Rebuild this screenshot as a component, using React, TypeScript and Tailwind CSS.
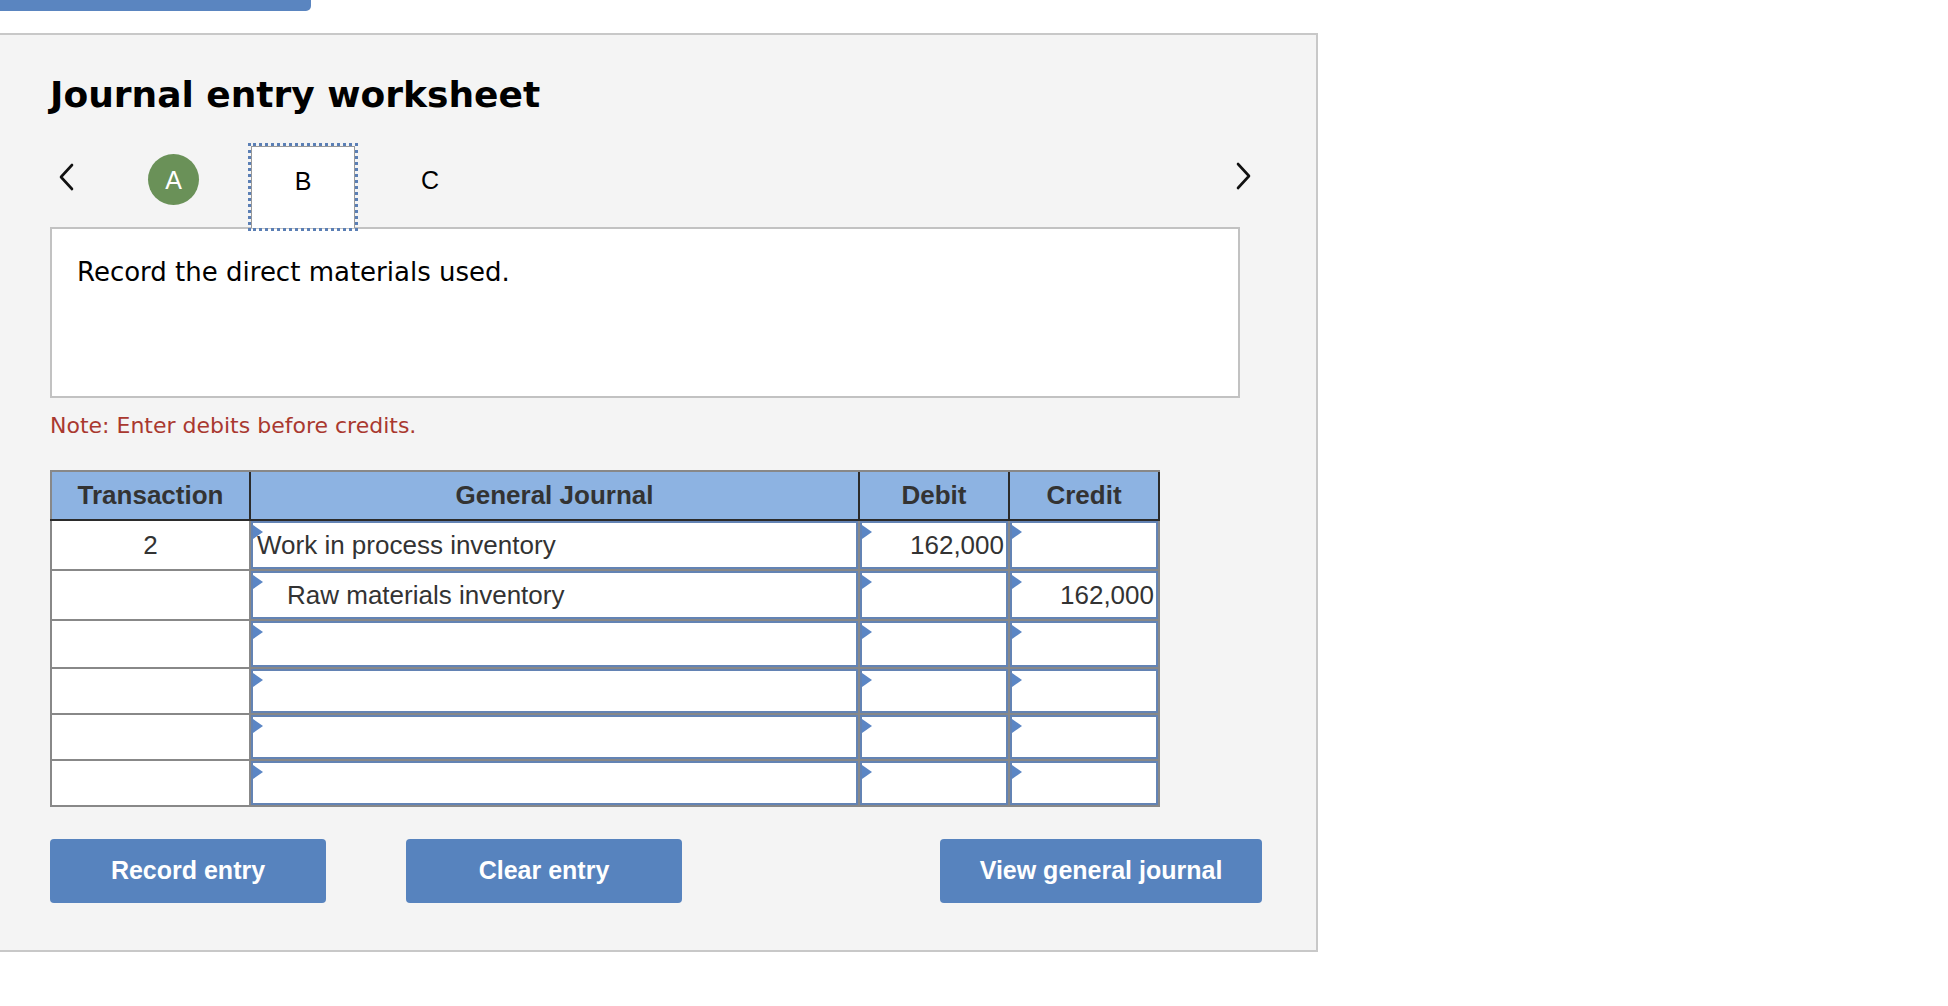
import React from 'react';

type Row = {
  h: string;
  tx: string;
  acct: string;
  indent: boolean;
  debit: string;
  credit: string;
};

const rows: Row[] = [
  { h: 'h-[50px]', tx: '2', acct: 'Work in process inventory', indent: false, debit: '162,000', credit: '' },
  { h: 'h-[50px]', tx: '', acct: 'Raw materials inventory', indent: true, debit: '', credit: '162,000' },
  { h: 'h-[48px]', tx: '', acct: '', indent: false, debit: '', credit: '' },
  { h: 'h-[46px]', tx: '', acct: '', indent: false, debit: '', credit: '' },
  { h: 'h-[46px]', tx: '', acct: '', indent: false, debit: '', credit: '' },
  { h: 'h-[46px]', tx: '', acct: '', indent: false, debit: '', credit: '' },
];

// little blue marker in the corner of each input cell
const Marker = () => (
  <span className="absolute left-[0px] top-[2px] h-0 w-0 border-y-[7px] border-l-[10px] border-y-transparent border-l-[#5b86c5]" />
);

const InputCell = ({ w, children, right }: { w: string; children?: React.ReactNode; right?: boolean }) => (
  <div className={`${w} h-full border-r-2 border-b-2 border-[#888888]`}>
    <div
      className={`relative flex h-full items-center border-2 border-[#6383b4] bg-white pr-[2px] pl-[4px] ${
        right ? 'justify-end' : 'justify-start'
      }`}
    >
      <Marker />
      {children}
    </div>
  </div>
);

const Chevron = ({ dir }: { dir: 'left' | 'right' }) => (
  <svg width="17" height="28" viewBox="0 0 17 28" className="shrink-0">
    <path
      d={dir === 'left' ? 'M14 2 L3 14 L14 26' : 'M3 2 L14 14 L3 26'}
      fill="none"
      stroke="#111"
      strokeWidth="2.6"
      strokeLinecap="round"
      strokeLinejoin="round"
    />
  </svg>
);

export default function App() {
  return (
    <div className="min-h-screen bg-white">
      <div className="h-[11px] w-[311px] rounded-br-[5px] bg-[#5a85c0]" />

      <div className="mt-[22px] w-[1318px] border-y-2 border-r-2 border-[#c8c8c8] bg-[#f4f4f4] pt-[38px] pb-[47px] pl-[50px]">
        <h1 className="font-['DejaVu_Sans',Verdana,sans-serif] text-[36px] leading-[44px] font-bold text-black">
          Journal entry worksheet
        </h1>

        {/* step tabs */}
        <div className="mt-[26px] flex h-[88px] w-[1202px] items-start font-['Liberation_Sans',Arial,sans-serif] text-[25px] leading-[26px]">
          <div className="mt-[20px] ml-[8px]">
            <Chevron dir="left" />
          </div>
          <div className="mt-[11px] ml-[73px] flex h-[51px] w-[51px] items-center justify-center rounded-full bg-[#6a9158] text-white">
            A
          </div>
          <div className="relative z-10 mt-[3px] ml-[52px] flex h-[82px] w-[104px] justify-center border border-b-0 border-[#9a9a9a] bg-white pt-[21px] text-black outline-[3px] outline-offset-0 outline-[#5b7fb5] outline-dotted">
            B
          </div>
          <div className="mt-[24px] ml-[3px] w-[144px] text-center text-black">C</div>
          <div className="mt-[19px] ml-auto">
            <Chevron dir="right" />
          </div>
        </div>

        <div className="-mt-[4px] h-[171px] w-[1190px] border-2 border-[#c2c2c2] bg-white pt-[27px] pl-[25px]">
          <p className="font-['DejaVu_Sans',Verdana,sans-serif] text-[26px] leading-[32px] text-black">
            Record the direct materials used.
          </p>
        </div>

        <p className="mt-[13px] font-['DejaVu_Sans',Verdana,sans-serif] text-[22px] leading-[30px] text-[#a9382f]">
          Note: Enter debits before credits.
        </p>

        {/* journal table */}
        <div className="mt-[29px] w-[1110px] font-['Liberation_Sans',Arial,sans-serif] text-[26px] text-[#333333]">
          <div className="flex h-[51px] border-t-2 border-b-2 border-t-[#888888] border-b-[#2b2b2b] bg-[#8db3e2] font-bold">
            <div className="flex w-[201px] items-center justify-center border-r-2 border-l-2 border-r-[#2b2b2b] border-l-[#888888]">
              Transaction
            </div>
            <div className="flex w-[609px] items-center justify-center border-r-2 border-[#2b2b2b]">General Journal</div>
            <div className="flex w-[150px] items-center justify-center border-r-2 border-[#2b2b2b]">Debit</div>
            <div className="flex w-[150px] items-center justify-center border-r-2 border-[#2b2b2b]">Credit</div>
          </div>

          {rows.map((r, i) => (
            <div key={i} className={`flex ${r.h}`}>
              <div className="flex h-full w-[201px] items-center justify-center border-r-2 border-b-2 border-l-2 border-[#888888] bg-white">
                {r.tx}
              </div>
              <InputCell w="w-[609px]">
                <span className={r.indent ? 'pl-[30px]' : ''}>{r.acct}</span>
              </InputCell>
              <InputCell w="w-[150px]" right>
                {r.debit}
              </InputCell>
              <InputCell w="w-[150px]" right>
                {r.credit}
              </InputCell>
            </div>
          ))}
        </div>

        <div className="mt-[32px] flex font-['Liberation_Sans',Arial,sans-serif] text-[25px] font-bold text-white">
          <button className="h-[64px] w-[276px] rounded-[4px] bg-[#5783be]">Record entry</button>
          <button className="ml-[80px] h-[64px] w-[276px] rounded-[4px] bg-[#5783be]">Clear entry</button>
          <button className="ml-[258px] h-[64px] w-[322px] rounded-[4px] bg-[#5783be]">View general journal</button>
        </div>
      </div>
    </div>
  );
}
